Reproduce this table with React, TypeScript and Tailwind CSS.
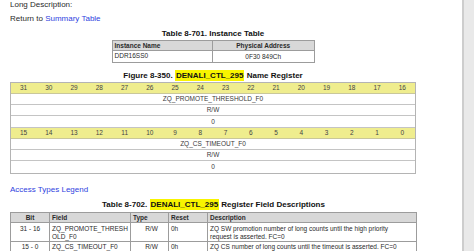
import React from "react";

const hi = [31, 30, 29, 28, 27, 26, 25, 24, 23, 22, 21, 20, 19, 18, 17, 16];
const lo = [15, 14, 13, 12, 11, 10, 9, 8, 7, 6, 5, 4, 3, 2, 1, 0];

function RegBlock({ bits, name, last }: { bits: number[]; name: string; last?: boolean }) {
  return (
    <>
      <div className="grid h-[11px] grid-cols-16 items-center border-b border-[#c9c79a] bg-[#efed8e] text-[#444]">
        {bits.map((b) => (
          <div key={b} className="text-center leading-[10px]">
            {b}
          </div>
        ))}
      </div>
      <div className="flex h-[11px] items-center justify-center border-b border-[#c4c4c4] leading-[10px]">{name}</div>
      <div className="flex h-[11px] items-center justify-center border-b border-[#c4c4c4] leading-[10px]">R/W</div>
      <div
        className={
          "flex h-[12px] items-center justify-center leading-[10px] " + (last ? "" : "border-b border-[#c4c4c4]")
        }
      >
        0
      </div>
    </>
  );
}

export default function App() {
  return (
    <div className="flex h-[251px] w-[474px] overflow-hidden bg-white font-['Liberation_Sans',Arial,sans-serif] text-[#2a2a2a]">
      <div className="flex-1 pl-[10px]">
        <div className="h-[10px] text-[8px] leading-[10px]">Long Description:</div>
        <div className="mt-[4px] h-[10px] text-[8px] leading-[10px]">
          Return to <span className="text-[#2f3fe0]">Summary Table</span>
        </div>

        <div className="w-[406px]">
          <div className="mt-[5px] h-[10px] text-center text-[8px] font-bold leading-[10px] text-[#111]">
            Table 8-701. Instance Table
          </div>
          <div className="mx-auto mt-[1px] w-[203px] border border-[#9c9c9c] text-[6.5px]">
            <div className="grid h-[10px] grid-cols-2 border-b border-[#9c9c9c] bg-[#d8d8d8] font-bold leading-[9px]">
              <div className="border-r border-[#9c9c9c] pl-[2px]">Instance Name</div>
              <div className="text-center">Physical Address</div>
            </div>
            <div className="grid h-[11px] grid-cols-2 items-center leading-[10px]">
              <div className="h-full border-r border-[#9c9c9c] pl-[2px] leading-[10px]">DDR16SS0</div>
              <div className="text-center">0F30 849Ch</div>
            </div>
          </div>

          <div className="mt-[8px] h-[10px] text-center text-[8px] font-bold leading-[10px] text-[#111]">
            Figure 8-350. <span className="bg-[#f8f400] px-[1px] py-[1px]">DENALI_CTL_295</span> Name Register
          </div>
          <div className="mt-[1px] border border-[#b4b4b4] text-[6.5px] text-[#3a3a3a]">
            <RegBlock bits={hi} name="ZQ_PROMOTE_THRESHOLD_F0" />
            <RegBlock bits={lo} name="ZQ_CS_TIMEOUT_F0" last />
          </div>
        </div>

        <div className="mt-[11px] h-[10px] text-[8px] leading-[10px] text-[#2f3fe0]">Access Types Legend</div>

        <div className="w-[407px]">
          <div className="mt-[5px] h-[10px] text-center text-[8px] font-bold leading-[10px] text-[#111]">
            Table 8-702. <span className="bg-[#f8f400] px-[1px] py-[1px]">DENALI_CTL_295</span> Register Field
            Descriptions
          </div>
          <div className="mt-[2px] border border-[#9c9c9c] text-[6.5px] text-[#2a2a2a]">
            <div className="grid h-[10px] grid-cols-[39px_81px_38px_39px_1fr] border-b border-[#9c9c9c] bg-[#d8d8d8] font-bold leading-[9px]">
              <div className="border-r border-[#9c9c9c] text-center">Bit</div>
              <div className="border-r border-[#9c9c9c] pl-[2px]">Field</div>
              <div className="border-r border-[#9c9c9c] pl-[2px]">Type</div>
              <div className="border-r border-[#9c9c9c] pl-[2px]">Reset</div>
              <div className="pl-[2px]">Description</div>
            </div>
            <div className="grid h-[19px] grid-cols-[39px_81px_38px_39px_1fr] border-b border-[#9c9c9c] leading-[8px]">
              <div className="border-r border-[#9c9c9c] pt-[2px] text-center">31 - 16</div>
              <div className="border-r border-[#9c9c9c] pl-[2px] pt-[2px]">
                ZQ_PROMOTE_THRESH
                <br />
                OLD_F0
              </div>
              <div className="border-r border-[#9c9c9c] pl-[4px] pt-[2px] text-center">R/W</div>
              <div className="border-r border-[#9c9c9c] pl-[2px] pt-[2px]">0h</div>
              <div className="pl-[2px] pt-[2px]">
                ZQ SW promotion number of long counts until the high priority
                <br />
                request is asserted. FC=0
              </div>
            </div>
            <div className="grid h-[11px] grid-cols-[39px_81px_38px_39px_1fr] leading-[10px]">
              <div className="border-r border-[#9c9c9c] text-center">15 - 0</div>
              <div className="border-r border-[#9c9c9c] pl-[2px]">ZQ_CS_TIMEOUT_F0</div>
              <div className="border-r border-[#9c9c9c] pl-[4px] text-center">R/W</div>
              <div className="border-r border-[#9c9c9c] pl-[2px]">0h</div>
              <div className="pl-[2px]">ZQ CS number of long counts until the timeout is asserted. FC=0</div>
            </div>
          </div>
        </div>
      </div>
      <div className="w-[12px] border-l-2 border-[#cdcdcd] bg-[#e9e9e9]" />
    </div>
  );
}
